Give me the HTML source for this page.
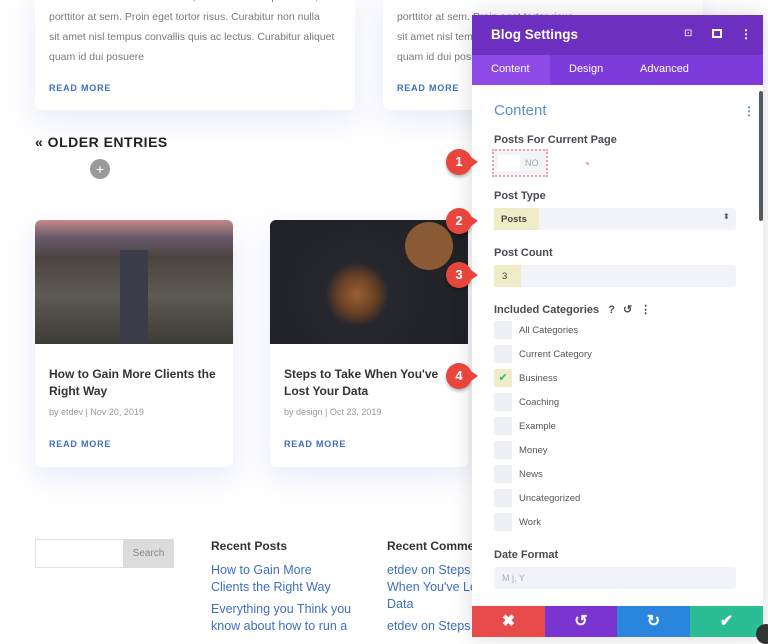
<!DOCTYPE html>
<html><head><meta charset="utf-8"><style>
*{box-sizing:border-box;margin:0;padding:0}
body{width:768px;height:637px;overflow:hidden;background:#fff;font-family:"Liberation Sans",sans-serif;position:relative;color:#333}
.abs{position:absolute}
.card{position:absolute;background:#fff;border-radius:6px;box-shadow:0 10px 30px rgba(120,140,220,.18);overflow:hidden}
.p{font-size:10.5px;color:#7a7a7a;line-height:20px;white-space:nowrap}
.rm{font-size:9px;font-weight:bold;color:#3d6fc2;letter-spacing:.8px}
.t{font-size:12px;font-weight:bold;color:#333;line-height:17px}
.m{font-size:9px;color:#999}
.badge{position:absolute;width:26px;height:26px;border-radius:50%;background:#e8453c;color:#fff;font-weight:bold;font-size:13px;text-align:center;line-height:26px;box-shadow:0 2px 3px rgba(0,0,0,.3)}
.badge:after{content:"";position:absolute;left:22px;top:6px;border-left:10px solid #e8453c;border-top:7px solid transparent;border-bottom:7px solid transparent}
.lbl{position:absolute;left:22px;font-size:11px;font-weight:bold;color:#4a4a55}
.inp{position:absolute;left:22px;width:242px;height:22px;background:#f1f3f8;border-radius:3px}
.cb{position:absolute;left:22px;width:18px;height:18px;background:#eef0f6;border-radius:2px}
.cl{position:absolute;left:47px;font-size:9.5px;color:#555}
.link{color:#3d6fc2;font-size:12.5px;line-height:17px}
</style></head><body>

<div class="card" style="left:35px;top:-10px;width:320px;height:120px">
 <div class="p" style="position:absolute;left:14px;top:-3px">lectus nibh. Curabitur arcu erat, accumsan id imperdiet et,<br>porttitor at sem. Proin eget tortor risus. Curabitur non nulla<br>sit amet nisl tempus convallis quis ac lectus. Curabitur aliquet<br>quam id dui posuere</div>
 <div class="rm abs" style="left:14px;top:93px">READ MORE</div>
</div>
<div class="card" style="left:383px;top:-10px;width:320px;height:120px">
 <div class="p" style="position:absolute;left:14px;top:-3px">lectus nibh. Curabitur<br>porttitor at sem. Proin eget tortor risus.<br>sit amet nisl tempus convallis quis ac<br>quam id dui posuere</div>
 <div class="rm abs" style="left:14px;top:93px">READ MORE</div>
</div>

<div class="abs" style="left:35px;top:134px;font-size:14px;font-weight:bold;letter-spacing:.5px;color:#222">« OLDER ENTRIES</div>
<div class="abs" style="left:90px;top:159px;width:20px;height:20px;border-radius:50%;background:#9a9a9a;color:#fff;text-align:center;line-height:20px;font-size:14px">+</div>

<div class="card" style="left:35px;top:220px;width:198px;height:247px">
 <div style="height:124px;background:linear-gradient(180deg,#c48a8a 0%,#6b5a6a 14%,#4a4440 30%,#5c5a52 60%,#3e3c36 100%)"></div>
 <div class="abs" style="left:85px;top:30px;width:28px;height:94px;background:#3a3c48"></div>
 <div class="t abs" style="left:14px;top:146px">How to Gain More Clients the<br>Right Way</div>
 <div class="m abs" style="left:14px;top:187px">by etdev | Nov 20, 2019</div>
 <div class="rm abs" style="left:14px;top:219px">READ MORE</div>
</div>
<div class="card" style="left:270px;top:220px;width:198px;height:247px">
 <div style="height:124px;background:radial-gradient(circle at 44% 60%,#9a6035 0,#6a4025 14%,#25272c 24%,#1e2024 100%)"></div>
 <div class="abs" style="left:135px;top:2px;width:48px;height:48px;border-radius:50%;background:#8a5a35"></div>
 <div class="t abs" style="left:14px;top:146px">Steps to Take When You've<br>Lost Your Data</div>
 <div class="m abs" style="left:14px;top:187px">by design | Oct 23, 2019</div>
 <div class="rm abs" style="left:14px;top:219px">READ MORE</div>
</div>

<div class="abs" style="left:35px;top:539px;width:139px;height:29px;border:1px solid #e2e2e2"></div>
<div class="abs" style="left:123px;top:539px;width:51px;height:29px;background:#dcdcdc;color:#888;font-size:10px;text-align:center;line-height:29px">Search</div>
<div class="abs" style="left:211px;top:539px;font-size:12px;font-weight:bold;color:#333">Recent Posts</div>
<div class="abs link" style="left:211px;top:562px">How to Gain More<br>Clients the Right Way</div>
<div class="abs link" style="left:211px;top:601px">Everything you Think you<br>know about how to run a</div>
<div class="abs" style="left:387px;top:539px;font-size:12px;font-weight:bold;color:#333">Recent Comme</div>
<div class="abs link" style="left:387px;top:562px">etdev on Steps<br>When You've Lo<br>Data</div>
<div class="abs link" style="left:387px;top:618px">etdev on Steps</div>

<div class="abs" style="left:472px;top:15px;width:291px;height:622px;background:#fff;box-shadow:0 0 20px rgba(0,0,0,.15)">
 <div class="abs" style="left:0;top:0;width:291px;height:40px;background:#6d2fbf"></div>
 <div class="abs" style="left:19px;top:12px;color:#fff;font-size:13.5px;font-weight:bold">Blog Settings</div>
 <div class="abs" style="left:212px;top:13px;color:#fff;font-size:10px">⊡</div>
 <div class="abs" style="left:240px;top:14px;width:10px;height:9px;border:2px solid #fff"></div>
 <div class="abs" style="left:268px;top:12px;color:#fff;font-size:12px;font-weight:bold">⋮</div>
 <div class="abs" style="left:0;top:40px;width:291px;height:30px;background:#7e3bdc"></div>
 <div class="abs" style="left:0;top:40px;width:78px;height:30px;background:#8d4ae6"></div>
 <div class="abs" style="left:19px;top:48px;color:#fff;font-size:11px">Content</div>
 <div class="abs" style="left:97px;top:48px;color:#fff;font-size:11px">Design</div>
 <div class="abs" style="left:168px;top:48px;color:#fff;font-size:11px">Advanced</div>
 <div class="abs" style="left:287px;top:76px;width:4px;height:130px;background:#555b66;border-radius:2px"></div>
 <div class="abs" style="left:22px;top:87px;font-size:15px;color:#5b8fc9">Content</div>
 <div class="abs" style="left:271px;top:89px;font-size:12px;color:#5b8fc9;font-weight:bold">⋮</div>
 <div class="lbl" style="top:119px">Posts For Current Page</div>
 <div class="abs" style="left:20px;top:134px;width:56px;height:28px;border:2px dotted #f0a0a0;background:#f3f4f8"></div>
 <div class="abs" style="left:26px;top:140px;width:22px;height:16px;background:#fff"></div>
 <div class="abs" style="left:53px;top:143px;font-size:9px;color:#9aa">NO</div>
 <div class="lbl" style="top:175px">Post Type</div>
 <div class="inp" style="top:193px"></div>
 <div class="abs" style="left:22px;top:193px;width:45px;height:22px;background:#efedc8;font-size:9.5px;color:#444;font-weight:bold;padding:6px 0 0 7px">Posts</div>
 <div class="abs" style="left:251px;top:197px;font-size:8px;color:#555">⬍</div>
 <div class="lbl" style="top:232px">Post Count</div>
 <div class="inp" style="top:250px"></div>
 <div class="abs" style="left:22px;top:250px;width:27px;height:22px;background:#efedc8;font-size:9.5px;color:#444;padding:6px 0 0 8px">3</div>
 <div class="lbl" style="top:288px">Included Categories <span style="margin-left:6px">?</span><span style="margin-left:8px">↺</span><span style="margin-left:8px">⋮</span></div>
 <div class="cb" style="top:306px"></div><div class="cl" style="top:310px">All Categories</div>
 <div class="cb" style="top:330px"></div><div class="cl" style="top:334px">Current Category</div>
 <div class="cb" style="top:354px;background:#efedc8;color:#2eb67d;font-size:11px;text-align:center;line-height:18px">✔</div><div class="cl" style="top:358px">Business</div>
 <div class="cb" style="top:378px"></div><div class="cl" style="top:382px">Coaching</div>
 <div class="cb" style="top:402px"></div><div class="cl" style="top:406px">Example</div>
 <div class="cb" style="top:426px"></div><div class="cl" style="top:430px">Money</div>
 <div class="cb" style="top:450px"></div><div class="cl" style="top:454px">News</div>
 <div class="cb" style="top:474px"></div><div class="cl" style="top:478px">Uncategorized</div>
 <div class="cb" style="top:498px"></div><div class="cl" style="top:502px">Work</div>
 <div class="lbl" style="top:534px">Date Format</div>
 <div class="inp" style="top:552px;font-size:9px;color:#aab;padding:6px 0 0 8px">M j, Y</div>
 <div class="abs" style="left:0;top:591px;width:73px;height:31px;background:#e94b4b;color:#fff;text-align:center;line-height:31px;font-weight:bold">✖</div>
 <div class="abs" style="left:73px;top:591px;width:72px;height:31px;background:#7a34cf;color:#fff;text-align:center;line-height:31px;font-weight:bold">↺</div>
 <div class="abs" style="left:145px;top:591px;width:73px;height:31px;background:#2a86dd;color:#fff;text-align:center;line-height:31px;font-weight:bold">↻</div>
 <div class="abs" style="left:218px;top:591px;width:73px;height:31px;background:#2bbd94;color:#fff;text-align:center;line-height:31px;font-weight:bold">✔</div>
</div>
<div class="abs" style="left:756px;top:624px;width:20px;height:20px;border-radius:50%;background:#333"></div>

<div class="badge" style="left:446px;top:149px">1</div>
<div class="badge" style="left:446px;top:208px">2</div>
<div class="badge" style="left:446px;top:262px">3</div>
<div class="badge" style="left:446px;top:363px">4</div>
<div class="abs" style="left:586px;top:162px;width:3px;height:3px;background:#f0a0a0;border-radius:50%"></div>
</body></html>
